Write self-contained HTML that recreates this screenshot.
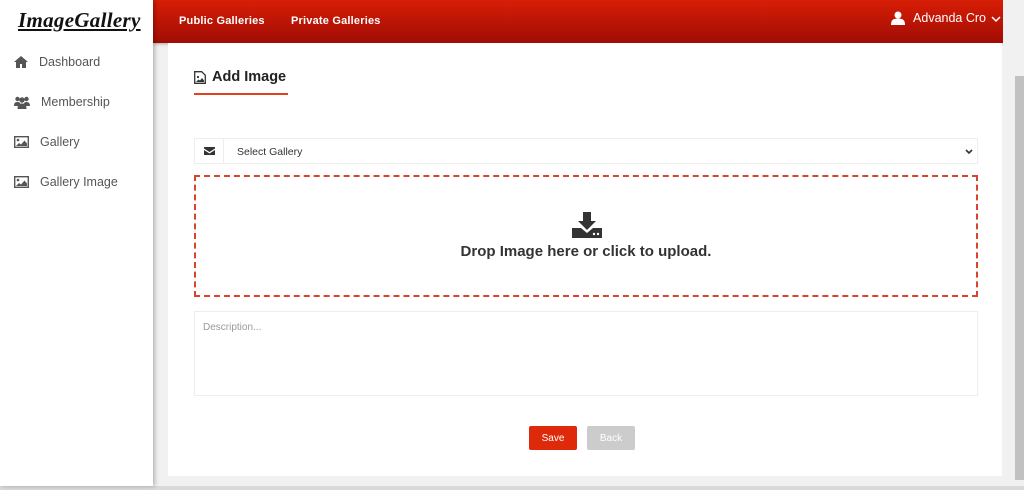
<!DOCTYPE html>
<html><head><style>
*{box-sizing:border-box;margin:0;padding:0}
body{width:1024px;height:490px;overflow:hidden;background:#f1f1f1;font-family:"Liberation Sans",sans-serif;position:relative}
.side{position:absolute;left:0;top:0;width:153px;height:486px;background:#fff;box-shadow:2px 0 4px rgba(0,0,0,.25);z-index:2}
.logo{position:absolute;left:18px;top:8px;font-family:"Liberation Serif",serif;font-style:italic;font-weight:bold;font-size:21px;text-decoration:underline;color:#111;letter-spacing:0.3px;transform:scaleX(1.0)}
.nav{position:absolute;left:14px;font-size:12.5px;color:#555;display:flex;align-items:center}
.nav svg{margin-right:11px}
.hdr{position:absolute;left:153px;top:0;width:850px;height:43px;background:linear-gradient(#d81e06,#a00c04);box-shadow:0 1px 3px rgba(0,0,0,.3)}
.hdr a{position:absolute;top:15px;color:#fff;font-weight:bold;font-size:11px;letter-spacing:.2px}
.user{position:absolute;right:2px;top:11px;color:#fff;font-size:12.5px;display:flex;align-items:center}
.card{position:absolute;left:168px;top:43px;width:834px;height:433px;background:#fff}
.title{position:absolute;left:26px;top:26px;font-weight:bold;font-size:14.5px;color:#222;display:flex;align-items:center}
.uline{position:absolute;left:26px;top:93px;width:94px;height:2px;background:#e2411f}
.sel{position:absolute;left:26px;top:95px;width:784px;height:26px;border:1px solid #eee}
.sel .ic{position:absolute;left:0;top:0;width:29px;height:24px;border-right:1px solid #eee;background:#fff}
.sel span{position:absolute;left:42px;top:7px;font-size:10.5px;color:#333}
.drop{position:absolute;left:26px;top:132px;width:784px;height:122px;border:2px dashed #d9442c}
.drop p{position:absolute;left:0;right:0;top:66px;text-align:center;font-weight:bold;font-size:15px;color:#333}
.desc{position:absolute;left:26px;top:268px;width:784px;height:85px;border:1px solid #eee;font-size:10px;color:#999;padding:10px 8px}
.btn{position:absolute;top:383px;height:24px;border-radius:2px;font-size:10px;color:#fff;text-align:center;line-height:26px}
.sb{position:absolute;left:1003px;top:0;width:21px;height:486px;background:#f1f1f1}
.th{position:absolute;left:1015px;top:76px;width:9px;height:404px;background:#c1c1c1}
.bot{position:absolute;left:0;top:486px;width:1024px;height:4px;background:#d9d9d9}
</style></head><body>
<div class="side">
<div class="logo">ImageGallery</div>
<div class="nav" style="top:55px"><svg width="14" height="12" viewBox="0 0 14 12"><path d="M7 0L0 6h2v6h4V8h2v4h4V6h2z" fill="#555"/></svg>Dashboard</div>
<div class="nav" style="top:95px"><svg width="16" height="13" viewBox="0 0 16 13"><circle cx="3.5" cy="3" r="2.2" fill="#555"/><circle cx="12.5" cy="3" r="2.2" fill="#555"/><circle cx="8" cy="4" r="2.7" fill="#555"/><path d="M0 10c0-3 1-4 3.5-4s3 1 3 4zM9.5 10c0-3 1-4 3-4s3.5 1 3.5 4z" fill="#555"/><path d="M3.5 13c0-4 1.5-5.5 4.5-5.5s4.5 1.5 4.5 5.5z" fill="#555"/></svg>Membership</div>
<div class="nav" style="top:135px"><svg width="15" height="12" viewBox="0 0 15 12"><rect x=".7" y=".7" width="13.6" height="10.6" fill="none" stroke="#555" stroke-width="1.4"/><circle cx="4" cy="4" r="1.3" fill="#555"/><path d="M2 10l3-3 2 1.5 3.5-4 2.5 3V10z" fill="#555"/></svg>Gallery</div>
<div class="nav" style="top:175px"><svg width="15" height="12" viewBox="0 0 15 12"><rect x=".7" y=".7" width="13.6" height="10.6" fill="none" stroke="#555" stroke-width="1.4"/><circle cx="4" cy="4" r="1.3" fill="#555"/><path d="M2 10l3-3 2 1.5 3.5-4 2.5 3V10z" fill="#555"/></svg>Gallery Image</div>
</div>
<div class="hdr">
<a style="left:26px">Public Galleries</a><a style="left:138px">Private Galleries</a>
<div class="user"><svg width="14" height="14" viewBox="0 0 14 14" style="margin-right:8px"><circle cx="7" cy="4" r="3.5" fill="#fff"/><path d="M0 14c0-5 2-6.5 7-6.5s7 1.5 7 6.5z" fill="#fff"/></svg>Advanda Cro<svg width="10" height="7" viewBox="0 0 10 7" style="margin:2px 0 0 5px"><path d="M1 1l4 4 4-4" stroke="#fff" stroke-width="1.5" fill="none"/></svg></div>
</div>
<div class="sb"></div><div class="th"></div>
<div class="card">
<div class="title"><svg width="12" height="13" viewBox="0 0 12 13" style="margin-right:6px"><path d="M.7.7h7l3.6 3.6v8H.7z" fill="none" stroke="#333" stroke-width="1.3"/><circle cx="4" cy="6" r="1.1" fill="#333"/><path d="M2 11l2.5-2.5 1.5 1 2-2.5 2 2.5V11z" fill="#333"/></svg>Add Image</div>
<div class="uline" style="top:50px"></div>
<div class="sel"><div class="ic"><svg width="11" height="8" viewBox="0 0 11 8" style="position:absolute;left:9px;top:8px"><path d="M0 0h11v1.5L5.5 5 0 1.5z M0 3l5.5 3.5L11 3v5H0z" fill="#333"/></svg></div><span>Select Gallery</span><svg width="8" height="6" viewBox="0 0 8 6" style="position:absolute;right:4px;top:10px"><path d="M1 1l3 3 3-3" stroke="#333" stroke-width="1.6" fill="none"/></svg></div>
<div class="drop"><svg width="30" height="27" viewBox="0 0 30 27" style="position:absolute;left:376px;top:35px"><path d="M11 0h8v9h5l-9 9-9-9h5z" fill="#333"/><path d="M0 16h9l6 5 6-5h9v10H0z" fill="#333"/><circle cx="22" cy="22" r="1.2" fill="#fff"/><circle cx="26" cy="22" r="1.2" fill="#fff"/></svg><p>Drop Image here or click to upload.</p></div>
<div class="desc">Description...</div>
<div class="btn" style="left:361px;width:48px;background:#de2a0b">Save</div>
<div class="btn" style="left:419px;width:48px;background:#ccc">Back</div>
</div>
<div class="bot"></div>
</body></html>
